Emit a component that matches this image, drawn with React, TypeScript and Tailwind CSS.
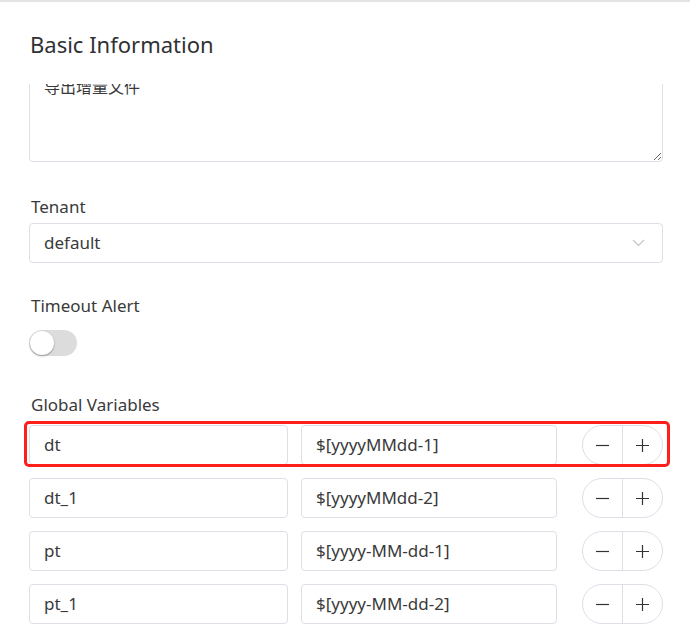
import { useState } from "react";

type Variable = { key: string; value: string };

const VARIABLES: Variable[] = [
  { key: "dt", value: "$[yyyyMMdd-1]" },
  { key: "dt_1", value: "$[yyyyMMdd-2]" },
  { key: "pt", value: "$[yyyy-MM-dd-1]" },
  { key: "pt_1", value: "$[yyyy-MM-dd-2]" },
];

function Stepper() {
  return (
    <div className="ml-auto flex h-10 w-[81px] shrink-0 rounded-full border border-[#dcdfe6] bg-white">
      <button className="flex w-10 items-center justify-center border-r border-[#dcdfe6] text-[#333]">
        <svg width="15" height="15" viewBox="0 0 15 15" fill="none" stroke="currentColor" strokeWidth="1.2">
          <path d="M1 7.5h13" />
        </svg>
      </button>
      <button className="flex flex-1 items-center justify-center text-[#333]">
        <svg width="15" height="15" viewBox="0 0 15 15" fill="none" stroke="currentColor" strokeWidth="1.2">
          <path d="M1 7.5h13M7.5 1v13" />
        </svg>
      </button>
    </div>
  );
}

export default function App() {
  const [alert, setAlert] = useState(false);

  return (
    <div className="flex h-[633px] w-[690px] flex-col overflow-hidden bg-white font-['Noto_Sans','Noto_Sans_CJK_SC',sans-serif] text-[#3a3a3a]">
      <div className="h-[2px] bg-[#e4e4e4]" />

      {/* HEADER */}
      <div className="h-[82px] shrink-0 px-[30px] pt-[27px]">
        <h2 className="text-[22px] leading-[30px] text-[#303133]">Basic Information</h2>
      </div>

      {/* BODY (scrolled) */}
      <div className="flex-1 overflow-hidden pl-[29px] pr-[27px]">
        <textarea
          readOnly
          defaultValue="导出增量文件"
          className="-mt-[18px] block h-[96px] w-full rounded-[4px] border border-[#dcdfe6] px-[14px] pt-2 text-[16px] leading-6 text-[#3a3a3a] outline-none"
        />

        <p className="mt-[33px] mb-[4px] pl-[2px] text-[17px] leading-6">Tenant</p>
        <div className="flex h-10 items-center justify-between rounded-[4px] border border-[#dcdfe6] pl-[14px] pr-[17px] text-[17px]">
          <span>default</span>
          <svg width="13" height="8" viewBox="0 0 13 8" fill="none" stroke="#c0c4cc" strokeWidth="1.2">
            <path d="M1 1l5.5 5.5L12 1" />
          </svg>
        </div>

        <p className="mt-[31px] pl-[2px] text-[17px] leading-6">Timeout Alert</p>
        <button
          onClick={() => setAlert(!alert)}
          className={`relative mt-[12px] block h-[26px] w-12 rounded-full ${alert ? "bg-[#409eff]" : "bg-[#dcdcdc]"}`}
        >
          <span
            className={`absolute top-[1px] h-6 w-6 rounded-full bg-white shadow-[0_1px_2px_rgba(0,0,0,0.35)] ${alert ? "left-[23px]" : "left-[1px]"}`}
          />
        </button>

        <p className="mt-[37px] mb-[8px] pl-[2px] text-[17px] leading-6">Global Variables</p>
        <div className="flex flex-col gap-[13px]">
          {VARIABLES.map((v, i) => (
            <div key={v.key} className="relative flex items-center">
              <div className="flex h-10 w-[259px] items-center rounded-[4px] border border-[#dcdfe6] px-[14px] text-[17px]">
                {v.key}
              </div>
              <div className="ml-[13px] flex h-10 w-[256px] items-center rounded-[4px] border border-[#dcdfe6] px-[14px] text-[17px]">
                {v.value}
              </div>
              <Stepper />
              {i === 0 && (
                <div className="pointer-events-none absolute -top-[4px] -right-[7px] -bottom-[2px] -left-[5px] rounded-[5px] border-[3px] border-[#ff1f1a]" />
              )}
            </div>
          ))}
        </div>
      </div>
    </div>
  );
}
